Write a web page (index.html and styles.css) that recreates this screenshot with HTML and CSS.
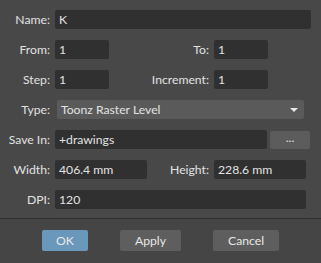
FILE: index.html
```html
<!DOCTYPE HTML>
<html>
<head>
<meta charset="utf-8">
<title>Level Settings</title>
<link rel="stylesheet" href="styles.css">
</head>

<body>
<div class="dlg">
	<div class="form">
		<div class="row">
			<label class="lbl">Name:</label>
			<div class="field grow">K</div>
		</div>
		<div class="row">
			<label class="lbl">From:</label>
			<div class="field short">1</div>
			<label class="lbl lbl2">To:</label>
			<div class="field short">1</div>
		</div>
		<div class="row">
			<label class="lbl">Step:</label>
			<div class="field short">1</div>
			<label class="lbl lbl2">Increment:</label>
			<div class="field short">1</div>
		</div>
		<div class="row">
			<label class="lbl">Type:</label>
			<div class="combo">Toonz Raster Level<span class="arrow"></span></div>
		</div>
		<div class="row">
			<label class="lbl">Save In:</label>
			<div class="field grow">+drawings</div>
			<a href="javascript:;" class="browse">...</a>
		</div>
		<div class="row">
			<label class="lbl">Width:</label>
			<div class="field mid">406.4 mm</div>
			<label class="lbl lbl3">Height:</label>
			<div class="field mid">228.6 mm</div>
		</div>
		<div class="row">
			<label class="lbl">DPI:</label>
			<div class="field grow dpi">120</div>
		</div>
	</div>
	<div class="btns">
		<a href="javascript:;" class="btn ok">OK</a>
		<a href="javascript:;" class="btn apply">Apply</a>
		<a href="javascript:;" class="btn cancel">Cancel</a>
	</div>
</div>
</body>
</html>
```

FILE: styles.css
```css
* {margin:0; padding:0; box-sizing:border-box;}
body{
	background:#484848;
	font-family:"Lato", "Noto Sans", sans-serif;
	font-size:12.2px;
	color:#e2e2e2;
}
.dlg{width:321px; height:263px;}
.form{
	display:flex;
	flex-direction:column;
	gap:11px;
	padding:10px 10px 10px 0;
	height:219px;
	border-bottom:1px solid #2f2f2f;
}
.row{display:flex; align-items:center; height:19px;}
.lbl{width:50px; text-align:right; margin-right:5px; flex:none;}
.lbl2{width:100px;}
.lbl3{width:62px;}
.field{
	height:19px;
	line-height:19px;
	background:#303030;
	border-radius:2px;
	padding-left:4px;
	flex:none;
}
.grow{flex:1;}
.short{width:54px;}
.mid{width:92px;}
.dpi{margin-right:5px;}
.combo{
	flex:1;
	position:relative;
	height:19px;
	line-height:19px;
	margin:0 7px 0 2px;
	padding-left:4px;
	background:#5a5a5a;
	border-radius:2px;
}
.arrow{
	position:absolute;
	right:6px;
	top:8px;
	border-left:4px solid transparent;
	border-right:4px solid transparent;
	border-top:4px solid #e8e8e8;
}
.browse{
	width:40px;
	height:18px;
	margin-left:3px;
	margin-right:1px;
	background:#5c5c5c;
	border-radius:2px;
	color:#e2e2e2;
	text-decoration:none;
	text-align:center;
	line-height:14px;
}
.btns{
	height:44px;
	background:#454545;
	display:flex;
	justify-content:center;
	gap:32px;
	padding-top:11px;
}
.btn{
	height:21px;
	line-height:21px;
	background:#5e5e5e;
	border-radius:2px;
	color:#e8e8e8;
	text-decoration:none;
	text-align:center;
}
.ok{background:#6a98ba; width:46px;}
.apply{width:61px;}
.cancel{width:66px;}
```
